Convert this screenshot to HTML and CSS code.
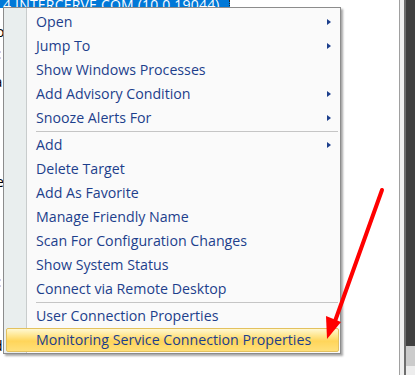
FILE: index.html
```html
<!DOCTYPE html>
<html>
<head>
<meta charset="utf-8">
<link rel="stylesheet" href="styles.css">
</head>
<body>
<div class="screen">
  <div class="tree">
    <div class="selrow"><span>4.INTERCERVE.COM (10.0.19044)</span></div>
    <div class="trow r1">to</div>
    <div class="trow r2 warn">c:</div>
    <div class="trow r3">la</div>
    <div class="trow r4">te</div>
    <div class="trow r5 warn">s:</div>
    <div class="trow r6">indows</div>
  </div>
  <div class="side">
    <div class="side-line"></div>
    <div class="side-gap"></div>
    <div class="side-edge"></div>
    <div class="side-panel">
      <div class="dark"></div>
      <div class="light1"></div>
      <div class="light2"></div>
    </div>
  </div>

  <div class="menu">
    <div class="item"><span>Open</span><i class="sub"></i></div>
    <div class="item"><span>Jump To</span><i class="sub"></i></div>
    <div class="item"><span>Show Windows Processes</span></div>
    <div class="item"><span>Add Advisory Condition</span><i class="sub"></i></div>
    <div class="item"><span>Snooze Alerts For</span><i class="sub"></i></div>
    <div class="sep"></div>
    <div class="item"><span>Add</span><i class="sub"></i></div>
    <div class="item"><span>Delete Target</span></div>
    <div class="item"><span>Add As Favorite</span></div>
    <div class="item"><span>Manage Friendly Name</span></div>
    <div class="item"><span>Scan For Configuration Changes</span></div>
    <div class="item"><span>Show System Status</span></div>
    <div class="item"><span>Connect via Remote Desktop</span></div>
    <div class="sep"></div>
    <div class="item"><span>User Connection Properties</span></div>
    <div class="item hot"><span>Monitoring Service Connection Properties</span></div>
  </div>

  <svg class="arrow" width="415" height="375" viewBox="0 0 415 375">
    <line x1="382" y1="190" x2="334" y2="324" stroke="#ff0000" stroke-width="4" stroke-linecap="round"/>
    <polygon points="327,339 326,316 341,322" fill="#ff0000"/>
  </svg>
</div>
</body>
</html>
```

FILE: styles.css
```css
html, body {
  margin: 0;
  padding: 0;
  background: #ffffff;
}
.screen {
  position: relative;
  width: 415px;
  height: 375px;
  overflow: hidden;
  display: flex;
  font-family: "Open Sans", "Noto Sans", sans-serif;
}
.tree {
  flex: 0 0 399px;
  display: flex;
  flex-direction: column;
  font-size: 14px;
  color: #000;
}
.selrow {
  width: 229px;
  height: 8px;
  background: #0078d7;
  border-right: 1px dotted #222;
  overflow: hidden;
  display: flex;
  align-items: flex-end;
  color: #fff;
}
.selrow span {
  line-height: 14px;
  margin-bottom: -4px;
  padding-left: 3px;
  white-space: nowrap;
  letter-spacing: 0.2px;
}
.trow {
  white-space: nowrap;
  line-height: 20px;
  text-indent: -9px;
}
.trow.warn { color: #b5651d; }
.r1 { margin-top: 14px; }
.r2 { margin-top: 2px; }
.r3 { margin-top: 8px; }
.r4 { margin-top: 80px; }
.r5 { margin-top: 80px; }
.r6 { margin-top: 44px; text-indent: -18px; }

.side {
  flex: 1;
  display: flex;
}
.side-line { width: 1px; background: #a0a0a0; }
.side-gap { width: 4px; background: #f0f0f0; }
.side-edge { width: 2px; background: #6e6e6e; }
.side-panel {
  flex: 1;
  display: flex;
  flex-direction: column;
}
.dark { height: 346px; background: #404040; }
.light1 { height: 20px; background: #cbcbcb; }
.light2 { flex: 1; background: #ededed; }

.menu {
  position: absolute;
  left: 3px;
  top: 7px;
  width: 336px;
  padding: 2px 0 1px;
  border: 1px solid #8c8c8c;
  background: linear-gradient(to right, #e9eeee 0 22px, #c8cccc 22px 23px, #fafafa 23px);
  box-shadow: 2px 2px 2px rgba(0, 0, 0, 0.35);
  font-family: "Open Sans", "Noto Sans", sans-serif;
  font-size: 14.2px;
  color: #1d3f8c;
}
.item {
  height: 24px;
  display: flex;
  align-items: center;
  justify-content: space-between;
  padding: 0 9px 0 32px;
  white-space: nowrap;
}
.item span { line-height: 24px; }
.sub {
  width: 0;
  height: 0;
  border-left: 4px solid #1d3f8c;
  border-top: 3.5px solid transparent;
  border-bottom: 3.5px solid transparent;
}
.sep {
  height: 1px;
  margin: 1px 2px 1px 32px;
  background: #c5c5c5;
}
.item.hot {
  margin: 0 1px 0 2px;
  padding-left: 29px;
  height: 22px;
  border: 1px solid #e3c15e;
  border-radius: 2px;
  background: linear-gradient(to bottom, #fff8d2 0%, #ffe68f 30%, #ffd55a 55%, #ffe07a 100%);
}
.item.hot span { line-height: 22px; }
.arrow {
  position: absolute;
  left: 0;
  top: 0;
  pointer-events: none;
}
```
